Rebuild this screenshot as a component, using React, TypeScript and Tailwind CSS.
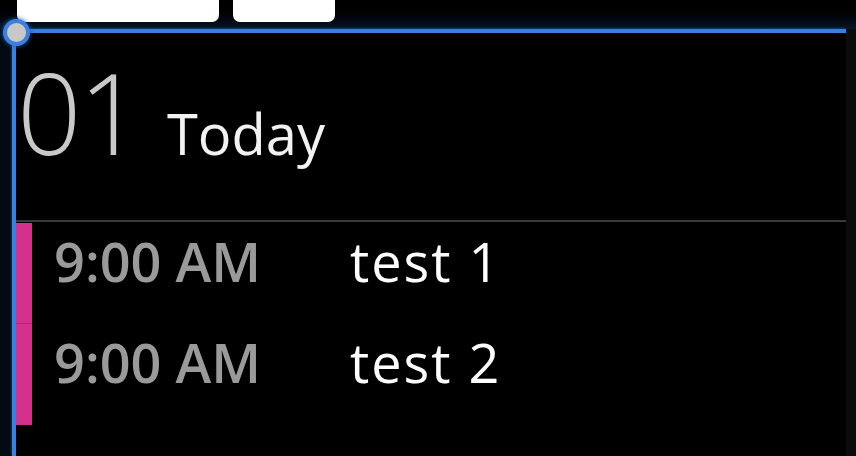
import React from "react";

const rows = [
  { time: "9:00 AM", title: "test 1" },
  { time: "9:00 AM", title: "test 2" },
];

export default function App() {
  return (
    <div
      className="relative w-[856px] h-[456px] overflow-hidden bg-[#020a14] flex flex-col"
      style={{ fontFamily: '"Open Sans", "Noto Sans", sans-serif' }}
    >
      {/* top strip */}
      <div className="h-[29px] shrink-0 bg-gradient-to-b from-[#000000] to-[#071626] flex items-start gap-[14px] pl-[17px]">
        <div className="w-[202px] h-[22px] bg-white rounded-b-[7px]" />
        <div className="w-[102px] h-[22px] bg-white rounded-b-[7px]" />
      </div>

      <div className="flex flex-1 min-h-0">
        <div className="w-[12px] shrink-0" />
        <div className="w-[834px] shrink-0 flex flex-col">
          <div className="h-[4px] shrink-0 bg-[#3a80dc] shadow-[0_0_3px_#1f5fb8]" />
          <div className="flex flex-1 min-h-0">
            <div className="w-[4px] shrink-0 bg-[#3a80dc] shadow-[0_0_3px_#1f5fb8]" />
            <div className="flex-1 bg-black flex flex-col">
              {/* header */}
              <div className="h-[187px] shrink-0 flex items-baseline pt-[22px] pl-[1px]">
                <span className="text-[113px] leading-none font-light text-[#c9c9c9] tracking-[-3px]">01</span>
                <span className="ml-[27px] text-[56px] leading-none text-[#f2f2f2]">Today</span>
              </div>
              <div className="h-[2px] shrink-0 bg-[#3a3a3a]" />
              {/* rows */}
              <div className="flex flex-col pt-[1px]">
                {rows.map((r, i) => (
                  <div key={i} className="flex h-[101px]">
                    <div
                      className={
                        i === 0
                          ? "w-[16px] bg-[#d4318f] border-b border-[#a82672]"
                          : "w-[16px] bg-[#d4318f]"
                      }
                    />
                    <div className="flex items-start pt-[11px]">
                      <span className="ml-[22px] w-[296px] text-[54px] leading-none font-semibold text-[#9a9a9a]">
                        {r.time}
                      </span>
                      <span className="text-[54px] leading-none text-white tracking-[2px]">{r.title}</span>
                    </div>
                  </div>
                ))}
              </div>
            </div>
          </div>
        </div>
        <div className="flex-1 bg-[#0b0b0b]" />
      </div>

      {/* corner handle */}
      <div className="absolute left-[3px] top-[19px] w-[27px] h-[27px] rounded-full bg-[#c8c8c8] border-[4px] border-[#3a80dc] shadow-[0_0_5px_#1f5fb8]" />
    </div>
  );
}
